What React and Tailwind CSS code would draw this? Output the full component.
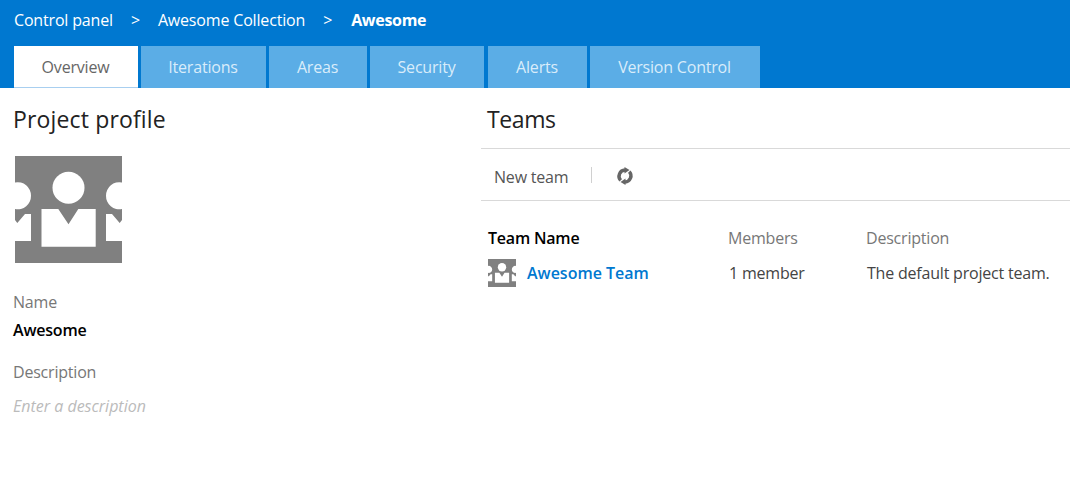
import React from 'react';

const tabs = [
  { label: 'Overview', width: 'w-[124px] mr-[3px]', active: true },
  { label: 'Iterations', width: 'w-[125px] mr-[3px]' },
  { label: 'Areas', width: 'w-[98px] mr-[3px]' },
  { label: 'Security', width: 'w-[114px] mr-[4px]' },
  { label: 'Alerts', width: 'w-[99px] mr-[3px]' },
  { label: 'Version Control', width: 'w-[170px]' },
];

const TeamIcon = ({ className }) => (
  <svg viewBox="0 0 107 107" className={className}>
    <rect width="107" height="107" fill="#808080" />
    <g fill="#fff">
      <circle cx="53.5" cy="31.7" r="16" />
      <polygon points="26.5,53 43.3,53 53.5,68.3 63.3,53 80.7,53 80.7,90.7 26.5,90.7" />
      <path d="M0 26.5 A13.3 13.3 0 0 1 16 39.7 A13.3 13.3 0 0 1 0 53 Z" />
      <polygon points="0,64 2.3,67 10,58 16,58 16,85 0,85" />
      <path d="M107 26.5 A13.3 13.3 0 0 0 91 39.7 A13.3 13.3 0 0 0 107 53 Z" />
      <polygon points="91,58 97,58 104.7,67 107,64 107,85 91,85" />
    </g>
  </svg>
);

const RefreshIcon = () => (
  <svg viewBox="0 0 18 18" className="w-[18px] h-[18px] block" fill="none">
    <path d="M9 3 A6.2 6.2 0 0 0 4.7 13.4" stroke="#666" strokeWidth="3.4" />
    <path d="M9 15 A6.2 6.2 0 0 0 13.3 4.6" stroke="#666" strokeWidth="3.4" />
    <polygon points="8.5,0 13.5,3 8.5,6.4" fill="#666" />
    <polygon points="9.5,18 4.5,15 9.5,11.6" fill="#666" />
  </svg>
);

export default function App() {
  return (
    <div className="w-[1070px] h-[493px] overflow-hidden bg-white text-[#222] font-['Open_Sans',sans-serif]">
      {/* header */}
      <div className="h-[88px] bg-[#0078d0] flex flex-col justify-between">
        <div className="flex items-center h-[40px] pl-[14px] text-white text-[16px] tracking-[-0.17px]">
          <span>Control panel</span>
          <span className="ml-[18px] mr-[18px]">&gt;</span>
          <span>Awesome Collection</span>
          <span className="ml-[18px] mr-[19px]">&gt;</span>
          <span className="font-bold tracking-[-0.3px]">Awesome</span>
        </div>
        <div className="flex pl-[13.5px]">
          {tabs.map((tab) => (
            <div
              key={tab.label}
              className={`h-[42px] flex items-center justify-center text-[16px] tracking-[-0.2px] ${tab.width} ${
                tab.active ? 'bg-white text-[#666] border-b border-[#a8cff0]' : 'bg-[#5bade6] text-[#d9ecfa]'
              }`}
            >
              {tab.label}
            </div>
          ))}
        </div>
      </div>

      <div className="flex">
        {/* project profile */}
        <div className="w-[481px] pl-[13px]">
          <h1 className="text-[23px] leading-[32px] mt-[15px] tracking-[0.15px] text-[#222]">Project profile</h1>
          <TeamIcon className="w-[107px] h-[107px] mt-[21px] ml-[2px]" />
          <div className="mt-[29px] text-[16px] leading-[20px] tracking-[-0.2px] text-[#777]">Name</div>
          <div className="mt-[8px] text-[16px] leading-[20px] tracking-[-0.2px] font-semibold text-black">Awesome</div>
          <div className="mt-[22px] text-[16px] leading-[20px] tracking-[-0.2px] text-[#777]">Description</div>
          <div className="mt-[14px] text-[16px] leading-[20px] italic text-[#bbb]">Enter a description</div>
        </div>

        {/* teams */}
        <div className="flex-1">
          <h2 className="text-[23px] leading-[32px] mt-[15px] pl-[6px] tracking-[-0.4px] text-[#222]">Teams</h2>
          <div className="mt-[13px] h-[53px] border-y border-[#d9d9d9] flex items-center pl-[13px]">
            <span className="text-[16px] leading-[22px] mt-[5px] tracking-[-0.2px] text-[#555]">New team</span>
            <span className="w-px h-[16px] bg-[#d0d0d0] ml-[23px]" />
            <span className="ml-[24px] mt-[2px]"><RefreshIcon /></span>
          </div>
          <div className="mt-[26px] pl-[6px] grid grid-cols-[241px_138px_1fr] text-[16px] tracking-[-0.2px]">
            <div className="font-semibold text-black leading-[22px] pl-px">Team Name</div>
            <div className="text-[#777] leading-[22px]">Members</div>
            <div className="text-[#777] leading-[22px]">Description</div>
            <div className="mt-[10px] flex items-center">
              <TeamIcon className="w-[28px] h-[28px] mr-[11px] ml-px" />
              <span className="font-semibold tracking-normal text-[#0078d0]">Awesome Team</span>
            </div>
            <div className="mt-[10px] flex items-center pl-px text-[#444]">1 member</div>
            <div className="mt-[10px] flex items-center pl-px text-[#444]">The default project team.</div>
          </div>
        </div>
      </div>
    </div>
  );
}
